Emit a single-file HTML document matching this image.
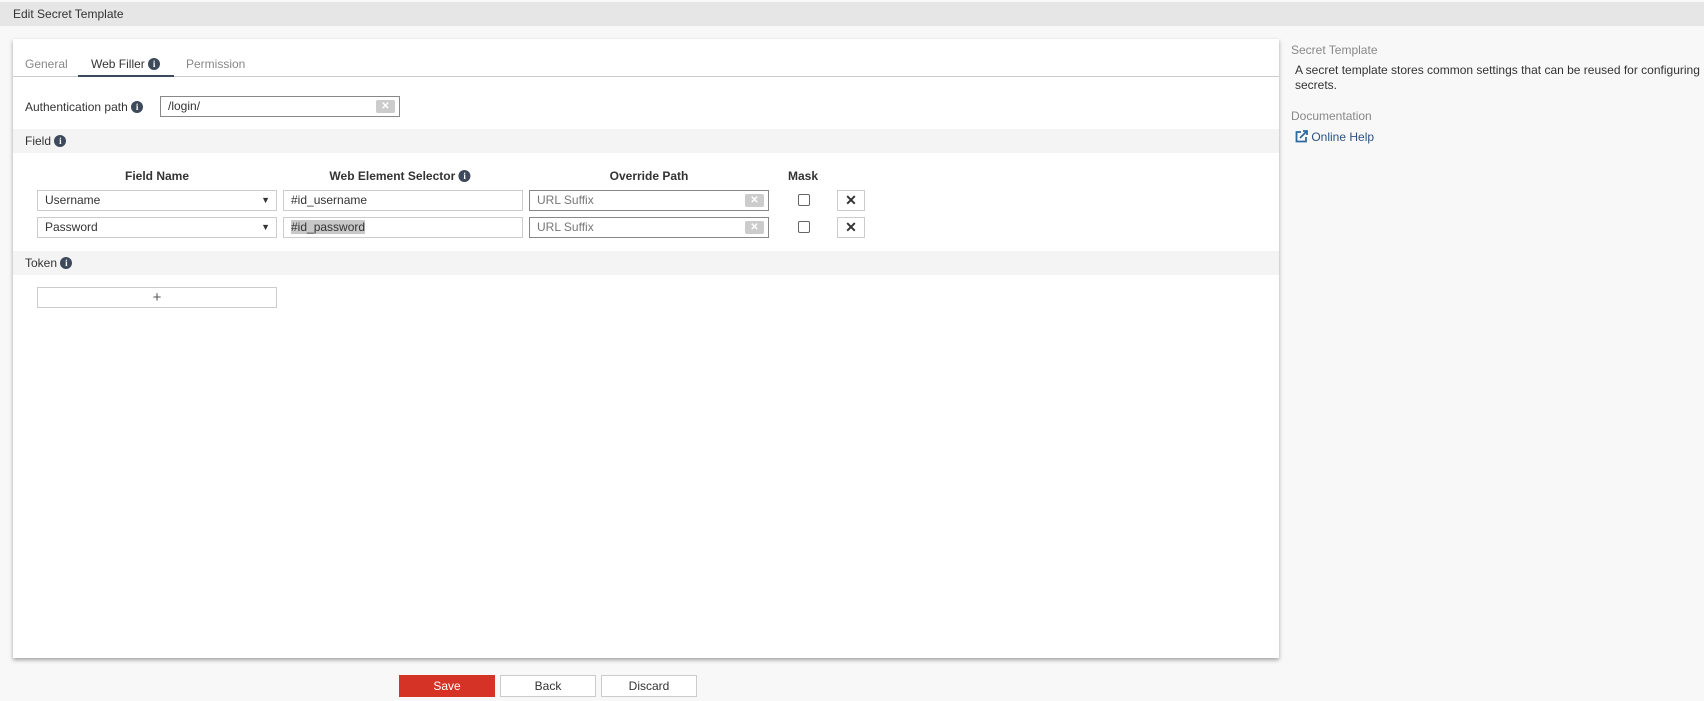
<!DOCTYPE html>
<html><head><meta charset="utf-8"><style>
*{box-sizing:border-box;margin:0;padding:0}
body{width:1704px;height:701px;background:#f8f8f8;font-family:"Liberation Sans",sans-serif;font-size:12px;color:#333;position:relative;overflow:hidden}
.a{position:absolute}
.info{display:inline-block;width:12px;height:12px;border-radius:50%;background:#3d4a5c;color:#fff;font-size:9px;font-weight:bold;text-align:center;line-height:12px;vertical-align:top;margin-top:1px;font-family:"Liberation Serif",serif}
.inp{position:absolute;background:#fff;border:1px solid #ccc;height:21px;line-height:19px;padding-left:7px}
.dk{border-color:#888}
.clr{position:absolute;right:4px;top:3px;width:19px;height:13px;background:#ccc;border-radius:2px;color:#fff;font-size:10px;line-height:13px;text-align:center;font-weight:bold}
.sec{position:absolute;left:13px;width:1266px;height:24px;background:#f4f4f4;padding-left:12px;line-height:24px}
.sec .info{margin-top:6px}
.hd{position:absolute;top:169px;font-weight:bold;transform:translateX(-50%);white-space:nowrap}
.btn{position:absolute;top:675px;height:22px;width:96px;border:1px solid #ccc;background:#fff;text-align:center;line-height:20px}
</style></head><body>
<div class="a" style="left:0;top:2px;width:1704px;height:24px;background:#e6e6e6;padding-left:13px;line-height:24px">Edit Secret Template</div>
<div class="a" style="left:13px;top:39px;width:1266px;height:619px;background:#fff;box-shadow:0 2px 4px rgba(0,0,0,.35)">
 <div class="a" style="left:0;top:37px;width:1266px;height:1px;background:#ccc"></div>
 <div class="a" style="left:12px;top:18px;color:#888">General</div>
 <div class="a" style="left:78px;top:18px">Web Filler <span class="info">i</span></div>
 <div class="a" style="left:65px;top:36px;width:96px;height:2px;background:#3d4a5c"></div>
 <div class="a" style="left:173px;top:18px;color:#888">Permission</div>
</div>
<div class="a" style="left:25px;top:100px">Authentication path <span class="info">i</span></div>
<div class="inp dk" style="left:160px;top:96px;width:240px">/login/<span class="clr">✕</span></div>
<div class="sec" style="top:129px">Field <span class="info">i</span></div>
<div class="hd" style="left:157px">Field Name</div>
<div class="hd" style="left:400px">Web Element Selector <span class="info">i</span></div>
<div class="hd" style="left:649px">Override Path</div>
<div class="hd" style="left:803px">Mask</div>
<div class="inp" style="left:37px;top:190px;width:240px">Username<span class="a" style="right:6px;top:0;font-size:9px">▼</span></div>
<div class="inp" style="left:283px;top:190px;width:240px">#id_username</div>
<div class="inp dk" style="left:529px;top:190px;width:240px;color:#777">URL Suffix<span class="clr">✕</span></div>
<div class="a" style="left:798px;top:194px;width:12px;height:12px;border:1px solid #666;border-radius:2px;background:#fff"></div>
<div class="inp" style="left:837px;top:190px;width:28px;padding:0;text-align:center;font-weight:bold;font-size:14px">✕</div>
<div class="inp" style="left:37px;top:217px;width:240px">Password<span class="a" style="right:6px;top:0;font-size:9px">▼</span></div>
<div class="inp" style="left:283px;top:217px;width:240px"><span style="background:#c8c8c8">#id_password</span></div>
<div class="inp dk" style="left:529px;top:217px;width:240px;color:#777">URL Suffix<span class="clr">✕</span></div>
<div class="a" style="left:798px;top:221px;width:12px;height:12px;border:1px solid #666;border-radius:2px;background:#fff"></div>
<div class="inp" style="left:837px;top:217px;width:28px;padding:0;text-align:center;font-weight:bold;font-size:14px">✕</div>
<div class="sec" style="top:251px">Token <span class="info">i</span></div>
<div class="inp" style="left:37px;top:287px;width:240px;padding:0;text-align:center;font-size:15px;color:#555">+</div>
<div class="a" style="left:1291px;top:43px;color:#888">Secret Template</div>
<div class="a" style="left:1295px;top:63px;width:405px;line-height:15px">A secret template stores common settings that can be reused for configuring secrets.</div>
<div class="a" style="left:1291px;top:109px;color:#888">Documentation</div>
<div class="a" style="left:1295px;top:130px;color:#2c5282"><svg width="13" height="13" viewBox="0 0 13 13" style="vertical-align:-2px"><path d="M6 2H1.5V11.5H11V7" fill="none" stroke="#2c6aa0" stroke-width="1.8"/><path d="M5 8L12 1M8 1H12V5" fill="none" stroke="#2c6aa0" stroke-width="1.8"/></svg> Online Help</div>
<div class="btn" style="left:399px;background:#d63327;border-color:#d63327;color:#fff">Save</div>
<div class="btn" style="left:500px">Back</div>
<div class="btn" style="left:601px">Discard</div>
</body></html>
